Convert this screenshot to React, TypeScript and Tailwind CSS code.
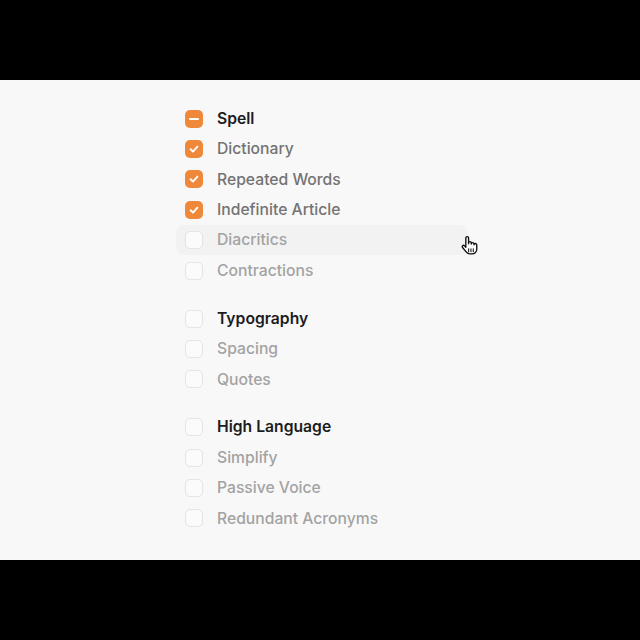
import React from "react";

type Item = { label: string; checked: boolean; hover?: boolean };
type Group = { title: string; state: "none" | "partial"; items: Item[] };

const groups: Group[] = [
  {
    title: "Spell",
    state: "partial",
    items: [
      { label: "Dictionary", checked: true },
      { label: "Repeated Words", checked: true },
      { label: "Indefinite Article", checked: true },
      { label: "Diacritics", checked: false, hover: true },
      { label: "Contractions", checked: false },
    ],
  },
  {
    title: "Typography",
    state: "none",
    items: [
      { label: "Spacing", checked: false },
      { label: "Quotes", checked: false },
    ],
  },
  {
    title: "High Language",
    state: "none",
    items: [
      { label: "Simplify", checked: false },
      { label: "Passive Voice", checked: false },
      { label: "Redundant Acronyms", checked: false },
    ],
  },
];

function Box({ mode }: { mode: "empty" | "check" | "dash" }) {
  if (mode === "empty") {
    return (
      <span className="w-[18px] h-[18px] shrink-0 rounded-[5px] border-[1.5px] border-[#e4e4e4] bg-[#fbfbfb]" />
    );
  }
  return (
    <span className="w-[18px] h-[18px] shrink-0 rounded-[5px] bg-[#f0883a] flex items-center justify-center">
      {mode === "check" ? (
        <svg width="12" height="12" viewBox="0 0 12 12" fill="none">
          <path d="M2.6 6.3 L5 8.6 L9.4 3.6" stroke="white" strokeWidth="1.9" strokeLinecap="round" strokeLinejoin="round" />
        </svg>
      ) : (
        <span className="w-[10px] h-[2px] rounded-full bg-white" />
      )}
    </span>
  );
}

function HandCursor() {
  return (
    <svg width="19" height="21" viewBox="0 0 18 20" className="absolute left-[284px] top-[10px]">
      <path
        d="M5.5 10 V2.8 a1.3 1.3 0 0 1 2.6 0 V8.4 V7.6 a1.3 1.3 0 0 1 2.6 0 V8.6 a1.3 1.3 0 0 1 2.6 0 V9.4 a1.3 1.3 0 0 1 2.6 0 V13.4 c0 2.6 -1.8 4.6 -4.5 4.6 H9.4 c-1.6 0 -2.7 -0.7 -3.6 -1.9 L2.4 11.9 a1.2 1.2 0 0 1 1.8 -1.6 L5.5 11.6 Z"
        fill="white"
        stroke="#111"
        strokeWidth="1.3"
        strokeLinejoin="round"
      />
      <path d="M8.2 13 V16 M10.4 13 V16 M12.6 13 V16" stroke="#111" strokeWidth="1" strokeLinecap="round" />
    </svg>
  );
}

export default function App() {
  return (
    <div className="w-[640px] h-[640px] flex flex-col bg-black" style={{ fontFamily: "Inter, 'Noto Sans', sans-serif" }}>
      <div className="h-[80px] shrink-0" />
      <div className="flex-1 bg-[#f8f8f8] pt-[23.5px]">
        <div className="ml-[176px] w-[292px] flex flex-col gap-[17.5px]">
          {groups.map((g) => (
            <div key={g.title} className="flex flex-col">
              <div className="flex items-center h-[30.4px] px-[9px] gap-[14px]">
                <Box mode={g.state === "partial" ? "dash" : "empty"} />
                <span className="text-[15.7px] font-semibold text-[#1c1c1c]">{g.title}</span>
              </div>
              {g.items.map((it) => (
                <div
                  key={it.label}
                  className={`relative flex items-center h-[30.4px] px-[9px] gap-[14px] rounded-lg ${it.hover ? "bg-[#f2f2f2]" : ""}`}
                >
                  <Box mode={it.checked ? "check" : "empty"} />
                  <span className={`text-[15.7px] font-medium ${it.checked ? "text-[#737373]" : "text-[#a3a3a3]"}`}>
                    {it.label}
                  </span>
                  {it.hover && <HandCursor />}
                </div>
              ))}
            </div>
          ))}
        </div>
      </div>
      <div className="h-[80px] shrink-0" />
    </div>
  );
}
